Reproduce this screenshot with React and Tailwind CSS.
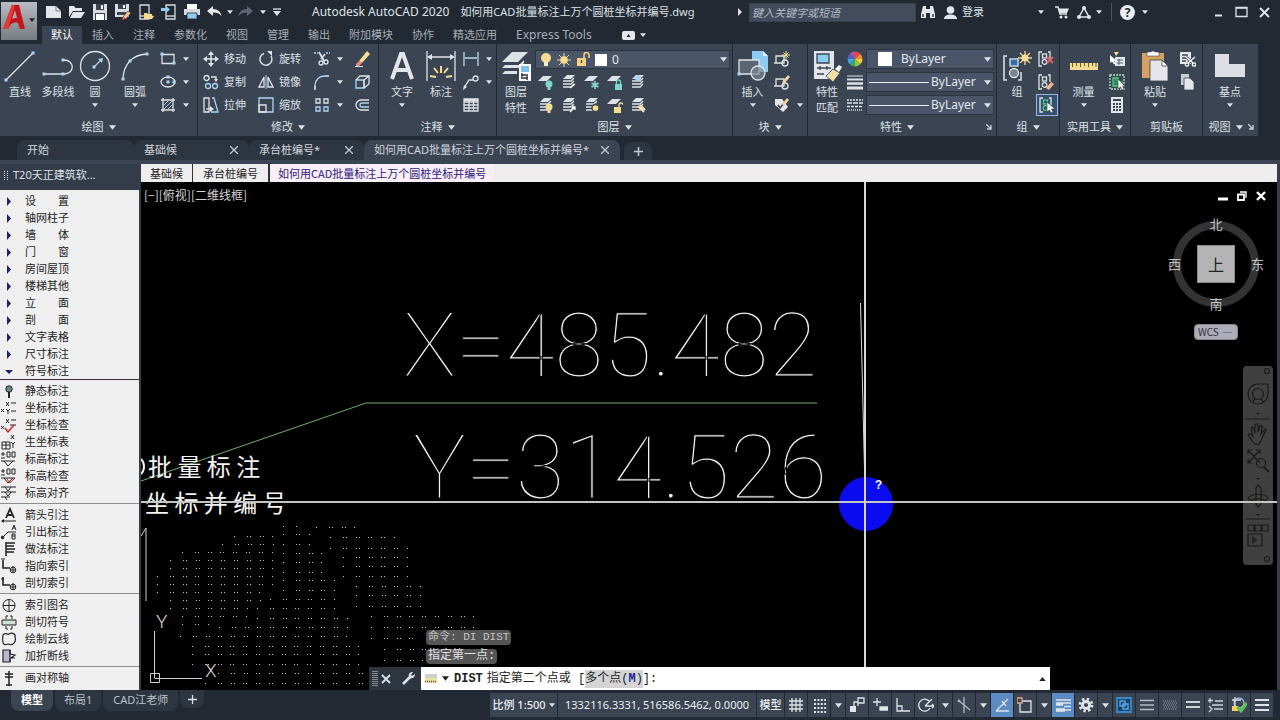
import React from "react";

/* ---------- shared primitives ---------- */

const FONT = "font-['Noto_Sans','Noto_Sans_CJK_SC',sans-serif]";

function Svg({ w = 16, h = 16, box, children, className = "" }) {
  return (
    <svg
      width={w}
      height={h}
      viewBox={box || `0 0 ${w} ${h}`}
      fill="none"
      stroke="#dfe3e8"
      strokeWidth="1.3"
      className={`shrink-0 ${className}`}
      aria-hidden="true"
    >
      {children}
    </svg>
  );
}

function Tri({ big, dark, className = "" }) {
  return (
    <svg width={big ? 7 : 6} height={big ? 5 : 4} viewBox="0 0 8 5" className={`shrink-0 ${dark ? "fill-[#222]" : "fill-[#dfe3e8]"} ${className}`} aria-hidden="true">
      <path d="M0 0h8L4 5z" />
    </svg>
  );
}

/* ---------- quick access icons ---------- */

const quick = {
  新建: (
    <Svg w={18} h={16}><path d="M1 2h10l5 5v7H1z" fill="#e4e6ea" stroke="none" /><path d="M11 2v5h5" stroke="#7a828e" strokeWidth="1" /></Svg>
  ),
  打开: (
    <Svg w={18} h={16}><path d="M1 13V2h5l1.500 2H14v3H5z" fill="#e4e6ea" stroke="none" /><path d="M5 8h12l-4 6H2z" fill="#e4e6ea" stroke="none" /></Svg>
  ),
  保存: (
    <Svg><path d="M1 0h14v16H1z" fill="#d8dbe0" stroke="none" /><path d="M4 0h8v6H4zM3 9h10v7H3z" fill="#3a424e" stroke="none" /><path d="M9 1h2v4H9zM4 10h8v6H4z" fill="#fff" stroke="none" /></Svg>
  ),
  另存为: (
    <Svg><path d="M0 0h14v13H0z" fill="#d8dbe0" stroke="none" /><path d="M3 0h8v5H3zM2 8h9v3H2z" fill="#3a424e" stroke="none" /><path d="M8 1h2v3H8z" fill="#fff" stroke="none" /><path d="M8 13l5-6 3 2-5 6z" fill="#f1c98a" stroke="#222933" strokeWidth=".6" /><path d="M7 16l1-3.500 3 2z" fill="#e8664f" stroke="none" /></Svg>
  ),
  从移动设备打开: (
    <Svg><path d="M2 1h9v14H2z" fill="#222933" stroke="#d8dbe0" /><path d="M2 12h9" /><path d="M6 14v-5h3l1 1h4v1.500l2 .5-2 3H6z" fill="#f5dc93" stroke="none" /></Svg>
  ),
  保存到移动设备: (
    <Svg><path d="M5 1h9v14H5z" fill="#222933" stroke="#d8dbe0" /><path d="M5 12h9" /><path d="M0 4h5V2l4 3.500L5 9V7H0z" fill="#8ecbf0" stroke="none" /></Svg>
  ),
  打印: (
    <Svg><path d="M3 0h10v5H3z" fill="#fff" stroke="none" /><path d="M0 5h16v6H0z" fill="#d8dbe0" stroke="none" /><path d="M3 9h10v6H3z" fill="#8ecbf0" stroke="#222933" strokeWidth=".8" /></Svg>
  ),
};

function Undo({ dim, flip }) {
  return (
    <Svg w={16} h={12} className={flip ? "-scale-x-100" : ""}>
      <path d="M1 5l6-5v3c5 0 8 3 8.500 7-2-2.500-4.500-3.500-8.500-3.500V10z" fill={dim ? "#5d6672" : "#e4e6ea"} stroke="none" />
    </Svg>
  );
}

/* ---------- title bar ---------- */

function IconButton({ label, className = "", children }) {
  return (
    <button type="button" aria-label={label} className={`flex items-center justify-center ${className}`}>
      {children}
    </button>
  );
}

function TitleBar() {
  return (
    <div className="flex h-6 items-center">
      <div className="flex items-center pl-[5px]">
        {Object.entries(quick).map(([name, icon]) => (
          <IconButton key={name} label={name} className="w-[23px]">{icon}</IconButton>
        ))}
        <IconButton label="放弃" className="w-[22px]"><Undo /></IconButton>
        <IconButton label="放弃列表" className="w-[10px]"><Tri /></IconButton>
        <IconButton label="重做" className="w-[22px]"><Undo dim flip /></IconButton>
        <IconButton label="重做列表" className="w-[12px]"><Tri /></IconButton>
        <IconButton label="自定义快速访问工具栏" className="w-[16px]">
          <Svg w={8} h={8}><path d="M0 1h8" /><path d="M0 3h8L4 8z" fill="#dfe3e8" stroke="none" /></Svg>
        </IconButton>
      </div>
      <h1 className="ml-[27px] flex gap-[11px] whitespace-nowrap text-[12px] text-[#dde1e6]">
        <span>Autodesk AutoCAD 2020</span>
        <span className="text-[11px] leading-[18px]">如何用CAD批量标注上万个圆桩坐标并编号.dwg</span>
      </h1>
      <div className="ml-auto flex items-center">
        <svg width="4" height="8" className="mr-[7px] fill-[#dfe3e8]" aria-hidden="true"><path d="M0 0l4 4-4 4z" /></svg>
        <input
          aria-label="搜索"
          placeholder="键入关键字或短语"
          className="h-[19px] w-[167px] border border-[#39424f] bg-[#424c5c] px-[2px] text-[11px] italic text-white placeholder:text-[#b4bbc6]"
        />
        <IconButton label="查找" className="w-[24px]">
          <Svg w={14} h={14}><path d="M2 1h3v3h4V1h3l2 8v4H9V8H5v5H0V9z" fill="#e4e6ea" stroke="none" /><path d="M2 9v3M12 9v3" stroke="#222933" /></Svg>
        </IconButton>
        <button type="button" className="flex w-[91px] items-center gap-[5px] pl-[4px] text-[11px] text-[#dde1e6]">
          <Svg w={13} h={13}><circle cx="6.500" cy="4" r="3.800" fill="#e4e6ea" stroke="none" /><path d="M0 13c0-3 3-4 5-4.500h3c2 .5 5 1.500 5 4.500z" fill="#e4e6ea" stroke="none" /></Svg>
          登录
        </button>
        <IconButton label="登录菜单" className="w-[20px]"><Tri /></IconButton>
        <IconButton label="商店" className="w-[22px]">
          <Svg w={14} h={13}><path d="M0 1h3l2 7h7" strokeWidth="1.500" /><path d="M3.500 2.500H14L12 7H5z" fill="#e4e6ea" stroke="none" /><circle cx="6" cy="11" r="1.500" fill="#e4e6ea" stroke="none" /><circle cx="11" cy="11" r="1.500" fill="#e4e6ea" stroke="none" /></Svg>
        </IconButton>
        <IconButton label="网络" className="w-[22px]">
          <Svg w={14} h={13}><path d="M7 2L2 11h10z" strokeWidth="1.500" /><circle cx="7" cy="2" r="2" fill="#e4e6ea" stroke="none" /><circle cx="2" cy="11" r="2" fill="#e4e6ea" stroke="none" /><circle cx="12" cy="11" r="2" fill="#e4e6ea" stroke="none" /></Svg>
        </IconButton>
        <IconButton label="网络菜单" className="w-[8px]"><Tri /></IconButton>
        <span className="mx-2 h-[18px] w-px bg-[#4a5462]" />
        <button type="button" className="flex size-[15px] items-center justify-center rounded-full bg-[#eceef1] text-[12px] leading-[15px] font-bold text-[#222933]">?</button>
        <IconButton label="帮助菜单" className="w-[20px]"><Tri /></IconButton>
        <IconButton label="最小化" className="ml-[52px] h-4 w-[22px]"><Svg w={9} h={10}><path d="M1 8.500h7" strokeWidth="2" /></Svg></IconButton>
        <IconButton label="最大化" className="w-[24px]"><Svg w={13} h={12}><path d="M1 1.500h11v9H1z" /><path d="M1 2h11" strokeWidth="1.500" /></Svg></IconButton>
        <IconButton label="关闭" className="mr-[4px] w-[23px]"><Svg w={11} h={11}><path d="M1 1l9 9M10 1l-9 9" strokeWidth="2" /></Svg></IconButton>
      </div>
    </div>
  );
}

const ribbonTabs = ["默认", "插入", "注释", "参数化", "视图", "管理", "输出", "附加模块", "协作", "精选应用", "Express Tools"];

function RibbonTabs() {
  return (
    <div role="tablist" className="flex h-5 items-end gap-px pl-[5px]">
      {ribbonTabs.map((t, i) => (
        <button
          key={t}
          type="button"
          role="tab"
          aria-selected={i === 0}
          className={`h-[18px] px-[9px] leading-[18px] whitespace-nowrap ${i === 10 ? "text-[12px]" : "text-[11px]"} ${i === 0 ? "bg-[#3b4453] text-white" : "text-[#a7adb6]"}`}
        >
          {t}
        </button>
      ))}
      <IconButton label="最小化功能区" className="ml-[20px] h-[18px] gap-[5px]">
        <Svg w={13} h={9}><rect width="13" height="9" rx="2" fill="#e4e6ea" stroke="none" /><path d="M4.500 6l2-3 2 3z" fill="#222933" stroke="none" /></Svg>
        <Tri />
      </IconButton>
    </div>
  );
}

/* ---------- ribbon ---------- */

function Panel({ title, menu = true, launcher, width, children }) {
  return (
    <section aria-label={title} className={`flex h-[92px] shrink-0 flex-col border-r border-[#222933] bg-[#3b4453] ${width}`}>
      <div className="flex h-[74px] pt-[4px]">{children}</div>
      <div className="flex h-[18px] items-center text-[11px] text-[#dde1e6]">
        <span className="flex flex-1 items-center justify-center gap-[5px]">
          {title}
          {menu && <Tri big />}
        </span>
        {launcher && (
          <IconButton label={`${title}设置`} className="mr-[4px]">
            <Svg w={6} h={6}><path d="M0 0l5 5M5 1v4H1" stroke="#c8cdd4" /></Svg>
          </IconButton>
        )}
      </div>
    </section>
  );
}

function Big({ label, icon, width, menu }) {
  return (
    <button type="button" className={`flex shrink-0 flex-col items-center text-[11px] leading-[16px] text-[#dde1e6] ${width}`}>
      <span className="flex h-[36px] items-center justify-center">{icon}</span>
      {label.map((l) => <span key={l}>{l}</span>)}
      {menu && <Tri className="mt-[3px]" />}
    </button>
  );
}

function Col({ className = "", children }) {
  return <div className={`flex flex-col gap-px ${className}`}>{children}</div>;
}

function Small({ label, text, icon, menu }) {
  return (
    <button type="button" aria-label={text || label} className="flex h-[22px] items-center gap-[5px] text-[11px] text-[#dde1e6]">
      {icon}
      {text}
      {menu && <Tri className="ml-[2px]" />}
    </button>
  );
}

const node = (x, y) => <rect key={`${x}-${y}`} x={x - 1.500} y={y - 1.500} width="3" height="3" fill="#a9d6f5" stroke="none" />;

const Sheet = ({ y = 0, x = 0 }) => <path d={`M${x + 1} ${y + 4}l4-4h8l-4 4z`} fill="#dfe3e8" stroke="none" />;

const Layers = ({ children, single }) => (
  <Svg>
    {single ? <path d="M0 7l5-5h9l-5 5z" fill="#dfe3e8" stroke="none" /> : (
      <>
        <Sheet y={1} x={1} />
        <path d="M2 7h8l3-3M2 10h8l3-3M2 13h8l3-3" strokeWidth="1.400" />
      </>
    )}
    {children}
  </Svg>
);

const Bulb = ({ c }) => <g stroke="none"><circle cx="11" cy="10" r="3.500" fill={c} /><path d="M9.500 13h3v3h-3z" fill={c} /></g>;
const Brackets = ({ c = "#dfe3e8" }) => (
  <>
    <path d="M4 1H1v14h3M10 1h2v7" />
    <rect x="4.500" y="3" width="4" height="4" stroke={c} />
    <circle cx="6.500" cy="11" r="2.300" stroke={c} />
  </>
);
const Cursor = ({ x = 8, y = 5 }) => <path d={`M${x} ${y}v10l2.500-2 1.500 3 2-1-1.500-3H16z`} fill="#fff" stroke="#2b333e" strokeWidth=".6" />;

function DrawPanel() {
  return (
    <Panel title="绘图" width="w-[198px]">
      <Big width="w-[40px]" label={["直线"]} icon={<Svg w={32} h={32}><path d="M2 30L30 2" />{node(2, 30)}{node(29, 3)}</Svg>} />
      <Big width="w-[36px]" label={["多段线"]} icon={<Svg w={32} h={32}><path d="M2 24h20c11 0 11-14 0-14" />{node(2, 24)}{node(21, 24)}{node(21, 10)}</Svg>} />
      <Big width="w-[38px]" label={["圆"]} menu icon={<Svg w={32} h={32}><circle cx="16" cy="16" r="14.500" /><path d="M15 17l7-7" stroke="#a9d6f5" /><path d="M24 8l-1 5-4-4z" fill="#a9d6f5" stroke="none" />{node(15, 17)}</Svg>} />
      <Big width="w-[42px]" label={["圆弧"]} menu icon={<Svg w={32} h={32}><path d="M4 30C4 14 14 4 29 4" />{node(4, 29)}{node(11, 11)}{node(28, 4)}</Svg>} />
      <Col className="pl-[4px]">
        <Small label="矩形" menu icon={<Svg><path d="M2 3.500h12v9H2z" />{node(2, 3)}{node(14, 12)}</Svg>} />
        <Small label="椭圆" menu icon={<Svg><ellipse cx="8" cy="8" rx="7" ry="5" />{node(8, 8)}{node(8, 3)}{node(14, 8)}</Svg>} />
        <Small label="图案填充" menu icon={<Svg><path d="M1 3h14M1 13h14M3 1v14M13 1v14" /><path d="M4 8l4-4M4 12l8-8M8 12l4-4" stroke="#a9c6e0" strokeWidth="1" /></Svg>} />
      </Col>
    </Panel>
  );
}

function ModifyPanel() {
  return (
    <Panel title="修改" width="w-[181px]">
      <Col className="pl-[5px]">
        <Small text="移动" icon={<Svg><path d="M8 2v12M2 8h12" strokeWidth="1.500" /><path d="M8 0l3 4H5zM8 16l3-4H5zM0 8l4-3v6zM16 8l-4-3v6z" fill="#dfe3e8" stroke="none" /></Svg>} />
        <Small text="复制" icon={<Svg><circle cx="3.500" cy="4" r="2.500" /><path d="M8 3h5v4" /><path d="M11 5h4l-2 3z" fill="#dfe3e8" stroke="none" /><circle cx="5" cy="12" r="2.500" stroke="#a9d6f5" /><circle cx="12" cy="12" r="2.500" stroke="#a9d6f5" /></Svg>} />
        <Small text="拉伸" icon={<Svg><path d="M1 1h5v14H1z" /><path d="M9 1h2l4 14H8" stroke="#a9d6f5" /><path d="M3 12h7" /><path d="M7 9l4 3-4 3z" fill="#dfe3e8" stroke="none" /></Svg>} />
      </Col>
      <Col className="pl-[12px]">
        <Small text="旋转" icon={<Svg><path d="M6 2.500A6 6 0 1 0 13 5" strokeWidth="1.500" /><path d="M9 0h5v5z" fill="#dfe3e8" stroke="none" /></Svg>} />
        <Small text="镜像" icon={<Svg><path d="M6 3v10H1zM10 3v10h5z" /><path d="M8 1v14" stroke="#a9d6f5" strokeWidth="1" /></Svg>} />
        <Small text="缩放" icon={<Svg><path d="M1 1h14v14H1z" stroke="#a9d6f5" /><path d="M1 8h7v7H1z" /></Svg>} />
      </Col>
      <Col className="pl-[13px]">
        <Small label="修剪" menu icon={<Svg><path d="M0 2h4M12 2h4" stroke="#a9d6f5" strokeDasharray="2 1" /><path d="M5 1l5 9M11 3L7 8" strokeWidth="1.800" /><circle cx="7" cy="12" r="2" /><circle cx="12" cy="11" r="2" /></Svg>} />
        <Small label="圆角" menu icon={<Svg><path d="M1 15V11M1 11C2 5 6 2 11 2" stroke="#a9d6f5" /><path d="M11 2h4M1 12v4" /></Svg>} />
        <Small label="阵列" menu icon={<Svg><path d="M2 2h4v4H2zM10 2h4v4h-4z" /><path d="M2 10h4v4H2zM10 10h4v4h-4z" stroke="#a9d6f5" /></Svg>} />
      </Col>
      <Col className="pl-[11px]">
        <Small label="删除" icon={<Svg><path d="M5 10L13 0l3 3-8 9z" fill="#f5dc93" stroke="none" /><path d="M5 10l3 2-3 3H2l0-2z" fill="#e8877b" stroke="none" /><path d="M1 15.500h8" strokeWidth="1" /></Svg>} />
        <Small label="分解" icon={<Svg><path d="M2 6h8v8H2z" stroke="#a9d6f5" /><path d="M2 6l4-4h9l-5 4M15 2v8l-5 4M10 6v8" /></Svg>} />
        <Small label="偏移" icon={<Svg><path d="M15 3H7a5 5 0 0 0 0 10h8" /><path d="M15 6H8a2 2 0 0 0 0 4h7" stroke="#a9d6f5" /></Svg>} />
      </Col>
    </Panel>
  );
}

function AnnotatePanel() {
  return (
    <Panel title="注释" width="w-[118px]">
      <Big width="w-[46px]" label={["文字"]} menu icon={<Svg w={28} h={32}><path d="M4 29L13 4h2l9 25M7 20h14" stroke="#e4e6ea" strokeWidth="4" /></Svg>} />
      <Big
        width="w-[32px]"
        label={["标注"]}
        icon={
          <Svg w={32} h={32}>
            <path d="M2 1v30M30 1v30M4 7h24" />
            <path d="M2 7l5-3v6zM30 7l-5-3v6z" fill="#dfe3e8" stroke="none" />
            <path d="M16 16v7M9 18l4 5M23 18l-4 5M5 26l6 1M27 26l-6 1" stroke="#f5dc93" strokeWidth="2" />
          </Svg>
        }
      />
      <Col className="pl-[6px]">
        <Small label="线性" menu icon={<Svg><path d="M1 1v14M15 1v14M2 7h12" stroke="#bcd9ee" /></Svg>} />
        <Small label="引线" menu icon={<Svg><path d="M1 14L6 6h4" /><circle cx="12.500" cy="4.500" r="2.500" /><path d="M0 16l1-5 3 2z" fill="#dfe3e8" stroke="none" /></Svg>} />
        <Small label="表格" icon={<Svg><path d="M1 2h14v12H1zM1 5h14M1 8h14M1 11h14M6 4v10M10.500 4v10" /><path d="M1 3h14" strokeWidth="2" /></Svg>} />
      </Col>
    </Panel>
  );
}

function LayersPanel() {
  const top = [
    ["关闭", <Layers single><Bulb c="#7fd3cf" /></Layers>],
    ["隔离", <Layers><path d="M9 14l5-4" stroke="#fff" /></Layers>],
    ["冻结", <Layers single><path d="M11 7v8M7.500 9l7 4M14.500 9l-7 4" stroke="#7fd3cf" strokeWidth="1.800" /></Layers>],
    ["锁定", <Layers single><path d="M8 10h7v6H8z" fill="#7fd3cf" stroke="none" /><path d="M9.500 10V8a2 2 0 0 1 4 0v2" stroke="#7fd3cf" /></Layers>],
    ["置为当前", <Layers><circle cx="8" cy="4" r="3" fill="#a9d6f5" stroke="none" /></Layers>],
  ];
  const bottom = [
    ["打开所有图层", <Layers><Bulb c="#f5dc93" /></Layers>],
    ["取消隔离", <Layers><path d="M9 15l5-5M11 10h3v3" stroke="#fff" /></Layers>],
    ["解冻所有图层", <Layers><circle cx="11.500" cy="11" r="3.500" fill="#f5dc93" stroke="#3b4453" /></Layers>],
    ["解锁", <Layers single><path d="M7 10h7v6H7z" fill="#f5dc93" stroke="none" /><path d="M12 10V8a2 2 0 0 1 4 0" stroke="#f5dc93" /></Layers>],
    ["匹配图层", <Layers><path d="M8 9l6 6M10 8l5 5" stroke="#f1e2b8" strokeWidth="2" /></Layers>],
  ];
  return (
    <Panel title="图层" width="w-[236px]">
      <Big
        width="w-[38px]"
        label={["图层", "特性"]}
        icon={
          <Svg w={32} h={32}>
            <path d="M2 12L12 2h16L18 12zM2 18l3-3h14l5-5v3l-5 5zM2 24l3-3h12v3z" fill="#dfe3e8" stroke="none" />
            <path d="M19 14h12v17H19z" fill="#fff" stroke="none" />
            <path d="M21 16h8v6h-8z" fill="#7cc0ef" stroke="none" />
            <path d="M21 25h7M28 28h-7M22 23v4M27 26v4" stroke="#2b333e" />
          </Svg>
        }
      />
      <div className="flex flex-1 flex-col gap-px pr-[2px]">
        <div className="mt-[2px] flex h-[19px] items-center gap-[5px] border border-[#2d3541] bg-[#4a556a] px-[4px]">
          <Svg w={12} h={16}><circle cx="6" cy="6" r="5" fill="#f5dc93" stroke="none" /><path d="M4 10h4v4H4z" fill="#f3ead0" stroke="none" /></Svg>
          <Svg w={14} h={14}><path d="M7 0v14M0 7h14M2 2l10 10M12 2L2 12" stroke="#f5dc93" strokeWidth="1" /><circle cx="7" cy="7" r="3.800" fill="#f5dc93" stroke="none" /></Svg>
          <Svg w={14} h={15}><path d="M1 6h9v8H1z" fill="#f5cf7f" stroke="none" /><path d="M8 6V3a2.500 2.500 0 0 1 5 0v3" stroke="#f5cf7f" strokeWidth="1.600" /><path d="M5.500 8v3" stroke="#3b4453" /></Svg>
          <span className="size-[12px] shrink-0 bg-white" />
          <select aria-label="当前图层" className="h-[17px] min-w-0 flex-1 appearance-none bg-transparent text-[12px] leading-[17px] text-[#e4e6ea]"><option>0</option></select>
          <Tri big className="-mr-[2px]" />
        </div>
        <div className="mt-px flex h-[22px] items-center gap-[7px] pl-[3px]">
          {top.map(([n, i]) => <IconButton key={n} label={n}>{i}</IconButton>)}
        </div>
        <div className="flex h-[22px] items-center gap-[7px] pl-[3px]">
          {bottom.map(([n, i]) => <IconButton key={n} label={n}>{i}</IconButton>)}
        </div>
      </div>
    </Panel>
  );
}

function BlockPanel() {
  const base = <><path d="M2 5h8v7H2zM0 12h4" /><circle cx="11" cy="12" r="3" /></>;
  return (
    <Panel title="块" width="w-[75px]">
      <Big
        width="w-[39px]"
        label={["插入"]}
        menu
        icon={
          <Svg w={32} h={32}>
            <path d="M15 1h11l5 5v16H15z" fill="#8ecbf0" stroke="none" />
            <path d="M26 1l5 5h-5z" fill="#e6f4fd" stroke="none" />
            <path d="M2 10h20v14H2z" fill="#5b6573" />
            <circle cx="21" cy="23" r="7" fill="#7a8797" fillOpacity=".7" />
            {node(2, 24)}
          </Svg>
        }
      />
      <Col className="pl-[2px]">
        <Small label="创建块" icon={<Svg>{base}<path d="M12 0v8M8 4h8M9.500 1.500l5 5M14.500 1.500l-5 5" stroke="#f5dc93" strokeWidth="1" /></Svg>} />
        <Small label="编辑块" icon={<Svg>{base}<path d="M8 8l6-7 2 2-6 7z" fill="#f3d3a4" stroke="none" /></Svg>} />
        <Small label="编辑属性" menu icon={<Svg><path d="M1 2h7l6 8-5 5L1 8z" fill="#e4e6ea" stroke="none" /><path d="M4 8l2 3 5-6" stroke="#3b4453" strokeWidth="1.600" /><path d="M8 7l5-6 2 2-5 6z" fill="#f3d3a4" stroke="none" /></Svg>} />
      </Col>
    </Panel>
  );
}

function PropSelect({ label, swatch }) {
  return (
    <div className="flex h-[20px] items-center border border-[#2d3541] bg-[#4a556a] pr-[2px] text-[12px] text-[#e4e6ea]">
      {swatch
        ? <span className="mr-[9px] ml-[11px] size-[14px] shrink-0 bg-white" />
        : <span className="mr-[2px] ml-[2px] h-px w-[60px] shrink-0 bg-[#eceef1]" />}
      <select aria-label={label} className="h-[18px] min-w-0 flex-1 appearance-none bg-transparent leading-[18px]"><option>ByLayer</option></select>
      <Tri big />
    </div>
  );
}

const wheel = ["#e8473f", "#f08a34", "#f4cf3b", "#8cc63f", "#34a86a", "#3aa7d8", "#4a63c9", "#b04ea8"];

function PropertiesPanel() {
  return (
    <Panel title="特性" launcher width="w-[189px]">
      <Big
        width="w-[38px]"
        label={["特性", "匹配"]}
        icon={
          <Svg w={32} h={32}>
            <path d="M3 1h20v28H3z" fill="#e4e6ea" stroke="none" />
            <path d="M6 4h12v9H6z" fill="#8ecbf0" stroke="#3b4453" />
            <path d="M6 18h14M6 24h7M9 16v4M16 16v4" stroke="#3b4453" />
            <path d="M15 26l7-7 7 4-7 9z" fill="#f3dfa8" stroke="#3b4453" strokeWidth=".8" />
            <path d="M24 19l4-4 3 2-3 5z" fill="#fff" stroke="none" />
          </Svg>
        }
      />
      <Col className="pl-px">
        <Small
          label="对象颜色"
          icon={
            <Svg>
              {wheel.map((c, i) => {
                const a = (i * Math.PI) / 4;
                const b = ((i + 1) * Math.PI) / 4;
                return <path key={c} d={`M8 8L${8 + 7.5 * Math.sin(a)} ${8 - 7.5 * Math.cos(a)}A7.5 7.5 0 0 1 ${8 + 7.5 * Math.sin(b)} ${8 - 7.5 * Math.cos(b)}z`} fill={c} stroke="none" />;
              })}
            </Svg>
          }
        />
        <Small label="线宽" icon={<Svg><path d="M0 2h16" strokeWidth="1" /><path d="M0 5.500h16" strokeWidth="2" /><path d="M0 9.500h16" strokeWidth="2.500" /><path d="M0 14h16" strokeWidth="3" /></Svg>} />
        <Small label="线型" icon={<Svg><path d="M0 3h16" strokeDasharray="2 1" /><path d="M0 6h16" strokeDasharray="5 1" /><path d="M0 9.500h16" strokeDasharray="3 1" /><path d="M0 13h16" strokeDasharray="1 1" /></Svg>} />
      </Col>
      <div className="ml-[3px] flex flex-1 flex-col gap-[3px] pt-px pr-[2px]">
        <PropSelect label="颜色" swatch />
        <PropSelect label="线宽" />
        <PropSelect label="线型" />
      </div>
    </Panel>
  );
}

function GroupPanel() {
  return (
    <Panel title="组" width="w-[63px]">
      <Big
        width="w-[40px]"
        label={["组"]}
        icon={
          <Svg w={32} h={32}>
            <path d="M6 6H3v24h3M20 22v8h-3" strokeWidth="1.500" />
            <rect x="9" y="9" width="8" height="7" fill="#2f6ea8" />
            <circle cx="13" cy="23" r="4.500" fill="#7a8490" />
            <path d="M24 1v14M17 8h14M19 3l10 10M29 3L19 13" stroke="#f5dc93" /><circle cx="24" cy="8" r="3.500" fill="#f5dc93" stroke="none" />
          </Svg>
        }
      />
      <Col className="-ml-px">
        <Small label="解除编组" icon={<span className="flex w-[20px] justify-center"><Svg><Brackets /><path d="M9 6l6 6M15 6l-6 6" stroke="#e2606b" strokeWidth="1.800" /></Svg></span>} />
        <Small label="编辑组" icon={<span className="flex w-[20px] justify-center"><Svg><Brackets /><path d="M8 14l5-6 3 2-5 6z" fill="#f1b58e" stroke="none" /></Svg></span>} />
        <Small label="启用组选择" icon={<span className="flex h-[22px] w-[22px] items-center justify-center border border-[#8fb8e6] bg-[#36506f]"><Svg><Brackets c="#4bd086" /><Cursor /></Svg></span>} />
      </Col>
    </Panel>
  );
}

function UtilitiesPanel() {
  return (
    <Panel title="实用工具" width="w-[71px]">
      <Big
        width="w-[47px]"
        label={["测量"]}
        menu
        icon={<Svg w={28} h={32}><path d="M0 13h28v7H0z" fill="#f5dc93" stroke="none" /><path d="M2.500 13v4M6.500 13v3M10.500 13v4M14.500 13v3M18.500 13v4M22.500 13v3M26 13v4" stroke="#6b5a2b" strokeWidth="1" /></Svg>}
      />
      <Col className="pl-[2px]">
        <Small label="快速选择" icon={<Svg><path d="M6 6h10v9H6z" fill="#e4e6ea" stroke="none" /><path d="M8 9h6M8 12h6M10 8v6" stroke="#3b4453" strokeWidth=".8" /><path d="M1 4v8l2-1.500 2 3 1.500-1L5 10h3z" fill="#fff" stroke="none" /><path d="M5 1h5L7 5z" fill="#f5dc93" stroke="none" /></Svg>} />
        <Small label="全部选择" icon={<Svg><path d="M1 1h14v14H1z" strokeDasharray="2 1" stroke="#b9dcc6" /><path d="M4 4h5v4h4v4H4z" fill="#2f8a57" stroke="#4bd086" /><Cursor x={9} y={5} /></Svg>} />
        <Small label="快速计算器" icon={<Svg><path d="M2 0h12v16H2z" fill="#e4e6ea" stroke="none" /><path d="M4 2h8v2H4z" fill="#3b4453" stroke="none" /><path d="M4 7h8M4 10h8M4 13h8" stroke="#3b4453" strokeWidth="1.800" strokeDasharray="2 1" /></Svg>} />
      </Col>
    </Panel>
  );
}

function ClipboardPanel() {
  return (
    <Panel title="剪贴板" menu={false} width="w-[72px]">
      <Big
        width="w-[48px]"
        label={["粘贴"]}
        menu
        icon={
          <Svg w={28} h={32}>
            <path d="M1 3h22v25H1z" fill="#d5a163" stroke="none" />
            <path d="M6 2h4a2.500 2.500 0 0 1 4 0h4v4H6z" fill="#fff" stroke="#3b4453" strokeWidth=".6" />
            <path d="M9 10h12l6 6v15H9z" fill="#e4e6ea" stroke="#3b4453" strokeWidth=".8" />
            <path d="M21 10v6h6z" fill="#fff" stroke="#3b4453" strokeWidth=".8" />
          </Svg>
        }
      />
      <Col className="pl-px">
        <Small label="剪切" icon={<Svg><path d="M0 1h11v12H0z" fill="#e4e6ea" stroke="none" /><path d="M2 4h6M2 7h4M2 10h4" stroke="#3b4453" /><path d="M6 6l8 7M15 6l-8 7" stroke="#3b4453" strokeWidth="2.800" /><path d="M6 6l7 6M15 6l-7 6" stroke="#fff" /><circle cx="7" cy="13.500" r="1.700" stroke="#fff" /><circle cx="14" cy="13.500" r="1.700" stroke="#fff" /></Svg>} />
        <Small label="复制剪裁" icon={<Svg><path d="M1 0h8v11H1z" fill="#c9ced5" stroke="none" /><path d="M4 4h6l4 4v8H4z" fill="#e4e6ea" stroke="#3b4453" strokeWidth=".8" /></Svg>} />
      </Col>
    </Panel>
  );
}

function ViewPanel() {
  return (
    <Panel title="视图" launcher width="w-[56px]">
      <Big width="w-[54px]" label={["基点"]} menu icon={<Svg w={32} h={32}><path d="M1 4h14v10h16v13H1z" fill="#dcdfe3" stroke="none" /></Svg>} />
    </Panel>
  );
}

/* ---------- drawing tabs ---------- */

const fileTabs = [
  { name: "开始", width: "w-[117px]" },
  { name: "基础候", width: "w-[115px]", close: true },
  { name: "承台桩编号*", width: "w-[115px]", close: true },
  { name: "如何用CAD批量标注上万个圆桩坐标并编号*", width: "w-[256px]", close: true, active: true },
];

function FileTabs() {
  return (
    <div className="flex h-6 items-end border-b-[4px] border-[#3b4453] pl-[17px]">
      {fileTabs.map((t) => (
        <div
          key={t.name}
          className={`flex h-[20px] items-center justify-between rounded-t-lg pr-[11px] pl-[10px] text-[11px] whitespace-nowrap text-[#d0d5dc] ${t.width} ${t.active ? "bg-[#3b4453]" : "bg-[#2d3540]"}`}
        >
          <button type="button">{t.name}</button>
          {t.close && (
            <IconButton label={`关闭 ${t.name}`}><Svg w={8} h={8}><path d="M0 0l8 8M8 0L0 8" stroke="#c4c9d0" /></Svg></IconButton>
          )}
        </div>
      ))}
      <IconButton label="新图形" className="ml-[4px] h-[18px] w-[28px] rounded-t-lg bg-[#2d3540]"><Svg w={9} h={9}><path d="M4.500 0v9M0 4.500h9" stroke="#c4c9d0" strokeWidth="1.500" /></Svg></IconButton>
    </div>
  );
}

/* ---------- side menu ---------- */

const ink = { stroke: "#222" };
const sideGroups = [
  ["设 置", "轴网柱子", "墙 体", "门 窗", "房间屋顶", "楼梯其他", "立 面", "剖 面", "文字表格", "尺寸标注", "符号标注"].map((t, i) => [
    t,
    i === 10
      ? <path d="M4 7h8l-4 4z" fill="#1c2360" stroke="none" />
      : <path d="M6 4l4 4.500L6 13z" fill="#1c2360" stroke="none" />,
  ]),
  [
    ["静态标注", <g {...ink}><circle cx="8" cy="6" r="3.200" fill="#6b8a86" /><path d="M8 9v6" strokeWidth="2" /></g>],
    ["坐标标注", <g {...ink} strokeWidth="1"><path d="M5 2l3 4M8 2L5 6M10 3h5M5 9l2 2 2-2M7 11v3M10 11h5M0 9l3 3M3 9l-3 3" /></g>],
    ["坐标检查", <g {...ink} strokeWidth="1"><path d="M5 2l3 4M8 2L5 6M10 3h5M9 8h6M0 9l3 3M3 9l-3 3" /><path d="M4 11l3 4 6-7" stroke="#c22" strokeWidth="1.400" /></g>],
    ["生坐标表", <g {...ink} strokeWidth="1"><path d="M1 8h8v7H1zM1 11h8M5 8v7M10 1l3 4M13 1l-3 4M10 8l2 2 2-2M12 10v4" /></g>],
    ["标高标注", <g {...ink} strokeWidth="1"><path d="M0 3h4M2 1v4M0 7h4M6 1h3v5H6zM11 1h3v5h-3zM0 10h14M3 10l4 5 5-5" /></g>],
    ["标高检查", <g {...ink} strokeWidth="1"><path d="M0 3h4M2 1v4M0 7h4M6 1h3v5H6zM11 1h3v5h-3zM0 10h14M3 10l4 5 5-5" /><path d="M6 11l3 4 5-5" stroke="#c22" /></g>],
    ["标高对齐", <g {...ink} strokeWidth="1"><path d="M0 2h15M0 7h15M0 12h9M4 2l3 4 3-4M4 7l3 4 3-4M4 12l2 3" /></g>],
  ],
  [
    ["箭头引注", <g {...ink}><path d="M5 11l4-9 4 9M6.500 8h5" strokeWidth="1.800" /><path d="M1 14h14" /><path d="M0 14l3-2v4z" fill="#222" stroke="none" /></g>],
    ["引出标注", <g {...ink} strokeWidth="1"><path d="M1 14l6-6h8M11 6l2-5 2 5M12 4h2M11 10h3v5h-3zM11 12h3" /><circle cx="1.500" cy="13.500" r="1.300" fill="#222" /></g>],
    ["做法标注", <g {...ink}><path d="M5 1v14M5 2h9M5 5h8M5 8h9M5 11h8" strokeWidth="1.500" /></g>],
    ["指向索引", <g {...ink}><path d="M2 2v8h7" strokeWidth="1.600" /><circle cx="12" cy="12" r="2.800" strokeWidth="1" /><path d="M9 12h6M12 8v7M0 1h4" strokeWidth="1" /></g>],
    ["剖切索引", <g {...ink}><path d="M2 2v8h7" strokeWidth="1.600" /><circle cx="12" cy="12" r="2.800" strokeWidth="1" /><path d="M9 12h6M12 8v7M0 4h3" strokeWidth="1" /></g>],
  ],
  [
    ["索引图名", <g {...ink}><circle cx="8" cy="8.500" r="6" /><path d="M2 8.500h12M8 2.500v12" /></g>],
    ["剖切符号", <g {...ink} strokeWidth="1"><path d="M1 6h14v5H1z" fill="#cfe0d4" /><path d="M5 5V2h2M11 5V2H9M5 12v3h2M11 12v3H9" /></g>],
    ["绘制云线", <g {...ink} strokeWidth="1.200"><path d="M2 4c2-3 4 0 6-1 3-2 7 0 6 3 1 3 0 5-1 6-2 3-5 1-6 1-3 1-5 1-5-2-1-2 0-5 0-7z" /></g>],
    ["加折断线", <g {...ink} strokeWidth="1.200"><path d="M2 2h7v12H2z" fill="#b9b6cf" /><path d="M9 2v4l5 1-4 3h4M9 14v-3" /></g>],
  ],
  [["画对称轴", <g {...ink} strokeWidth="1.500"><path d="M8 1v15M4 4h8M4 7h8M5 15h6" /></g>]],
];

function SideMenu() {
  return (
    <aside className="mr-[2px] flex w-[139px] shrink-0 flex-col overflow-hidden bg-[#f0efef]">
      <div className="flex h-[26px] shrink-0 items-center gap-[5px] bg-[#343c4a] pb-[3px] pl-[4px] text-[11px] text-[#dde1e6]">
        <Svg w={4} h={10}><path d="M.5 0v10M3.500 0v10" strokeWidth="1" strokeDasharray="1 1" /></Svg>
        <h2>T20天正建筑软...</h2>
      </div>
      <nav aria-label="天正建筑">
        {sideGroups.map((g, i) => (
          <ul key={i} className={`border-b pt-[2px] last:border-b-0 ${i === 0 ? "border-[#3a2f3a]" : "border-[#8d8d8d] pb-[2px]"}`}>
            {g.map(([name, icon]) => (
              <li key={name}>
                <button type="button" className="flex h-[17px] w-full items-center pl-px text-[11px] leading-[16px] text-[#1d1d1d]">
                  <svg width="16" height="16" fill="none" className="mr-[8px] shrink-0" aria-hidden="true">{icon}</svg>
                  <span className="flex w-[44px] justify-between">
                    {name.split(" ").map((p) => <span key={p}>{p}</span>)}
                  </span>
                </button>
              </li>
            ))}
          </ul>
        ))}
      </nav>
    </aside>
  );
}

/* ---------- drawing area ---------- */

/* Pile rows: [y, first x, last x] in drawing units; columns are 12.8 apart */
const piles = [
  [526, 283, 296], [527, 316, 355], [534, 283, 308], [536, 234, 272], [537, 330, 394],
  [544, 222, 272], [544, 283, 308], [548, 330, 407], [552, 182, 272], [553, 283, 321],
  [557, 343, 407], [560, 170, 272], [562, 283, 321], [566, 343, 407], [568, 170, 272],
  [572, 283, 321], [576, 157, 272], [576, 343, 407], [580, 283, 334], [584, 157, 272],
  [586, 356, 419], [590, 283, 334], [592, 157, 259], [595, 356, 419], [600, 170, 259],
  [599, 270, 334], [606, 356, 419], [608, 170, 246], [608, 257, 334], [616, 182, 246],
  [618, 257, 347], [616, 371, 475], [624, 182, 208], [627, 219, 347], [627, 371, 475],
  [636, 180, 347], [638, 371, 420], [646, 192, 360], [649, 384, 490], [654, 192, 360],
  [660, 384, 424], [664, 192, 360], [673, 218, 364], [683, 205, 364],
];

const pilePath = piles
  .map(([y, x0, x1]) => {
    let d = "";
    for (let x = x0; x <= x1 + 2; x += 12.8) {
      const px = Math.round(x);
      d += `M${px} ${y}h1`;
      if (x > x0 && x < x1 - 3) d += `m2 0h1`;
    }
    return d;
  })
  .join("");

function Drawing() {
  return (
    <svg className="absolute inset-0 h-full w-full" aria-label="图形">
      <g transform="translate(-141 -182)">
        <path d="M141 481L366 403H817" fill="none" stroke="#6fae6c" />
        <g fill="#f0f0f0" stroke="#000" strokeWidth="1" fontFamily="Roboto, sans-serif" fontWeight="100" fontSize="89">
          <text x="403" y="376">X=485.482</text>
          <text x="413" y="498">Y=314.526</text>
        </g>
        <path d="M860.500 303L865 490" stroke="#d8d8d8" />
        <path d={pilePath} transform="translate(0 .5)" stroke="#c4c4c4" />
        <g fill="#f4f4f4" fontFamily="'Noto Sans CJK SC', sans-serif" fontSize="24">
          <text x="148" y="476">批 量 标 注</text>
          <text x="145" y="512">坐 标 并 编 号</text>
        </g>
        <path d="M141 459c4 4 4 11 0 15" fill="none" stroke="#f4f4f4" strokeWidth="2" />
        <path d="M141 536l5-8v73" fill="none" stroke="#d0d0d0" />
        <g fill="none" stroke="#cfcfcf">
          <path d="M154.500 631v47M154.500 678.500H202M150.500 673.500h9v9h-9z" />
        </g>
        <g fill="#d8d8d8" fontFamily="Roboto, sans-serif" fontWeight="300" fontSize="19">
          <text x="156" y="628">Y</text>
          <text x="205" y="677">X</text>
        </g>
      </g>
    </svg>
  );
}

function Crosshair() {
  return (
    <svg className="pointer-events-none absolute inset-0 h-full w-full" aria-hidden="true">
      <g transform="translate(-141 -182)">
        <circle cx="866" cy="504" r="27" fill="#0b0bf0" />
        <path d="M0 502H4000" stroke="#c4c6c2" strokeWidth="2" />
        <path d="M865 0V4000" stroke="#d6d6d6" strokeWidth="2" />
        <text x="875" y="489" fill="#f5f5f5" fontFamily="'Liberation Mono', monospace" fontWeight="700" fontSize="12">?</text>
      </g>
    </svg>
  );
}

function ViewCube() {
  return (
    <div className="absolute top-[33px] right-[13px] flex w-[96px] flex-col items-center font-['Noto_Sans_CJK_SC',sans-serif] text-[13px] leading-[18px] text-[#c4c4c4]">
      <svg className="absolute top-[3px] left-[2px]" width="92" height="92" aria-hidden="true"><circle cx="46" cy="46" r="39" fill="none" stroke="#333" strokeWidth="8" /></svg>
      <span className="relative">北</span>
      <div className="relative flex w-full items-center justify-between py-[12px]">
        <span>西</span>
        <button type="button" className="size-[38px] border border-[#8b8b8b] bg-[#b4b4b4] text-[16px] text-[#222]">上</button>
        <span>东</span>
      </div>
      <span className="relative">南</span>
      <button type="button" className="mt-[11px] flex h-[16px] w-[44px] items-center gap-[4px] rounded border border-[#8c8a98] bg-[#aeacb8] px-[3px] text-[10px] leading-[14px] text-[#33333d]">
        WCS
        <span className="h-px w-[9px] bg-[#7c7a88]" />
      </button>
    </div>
  );
}

function NavBar() {
  return (
    <div className="absolute top-[184px] right-[4px] flex h-[199px] w-[30px] flex-col items-center rounded bg-[#484848] opacity-90">
      <svg width="30" height="199" fill="none" stroke="#1d1d1d" strokeWidth="1.200" aria-label="导航栏">
        <circle cx="24" cy="5" r="2.500" />
        <circle cx="24" cy="193" r="2.500" />
        <path d="M15 18h9q1 0 1 1v9a10 10 0 1 1-10-10z" />
        <circle cx="15" cy="28" r="5.500" />
        <path d="M10 36l2-4M20 36l-2-4M3 53h24M3 153h24" />
        <path d="M13 47h4l-2 2zM13 112h4l-2 2zM13 148h4l-2 2z" fill="#1d1d1d" stroke="none" />
        <path d="M10 76c-2-3-4-5-5-7 1-2 3-1 5 1l-2-8c1-2 2-1 3 1l1 4V59c1-2 3-1 3 0v7l2-6c1-1 3 0 2 1l-1 7 4-5c2 0 1 2 0 3l-3 6c0 3-2 4-3 6-3 1-5 0-6-2z" />
        <path d="M5 84l12 13M17 84L5 97M5 88v-4h4M17 88v-4h-4M5 93v4h4" />
        <circle cx="18" cy="97" r="4.500" />
        <path d="M21 101l5 5" strokeWidth="2" />
        <path d="M13 122l2-3 3 3v16l-3 3-2-3z" /><path d="M5 132c4-5 17-5 20 0l-3 3c-3-3-11-3-14 0z" />
        <path d="M5 159h6v6H5zM12 159h6v6h-6zM19 159h6v6h-6zM5 168h14v12H5z" />
        <path d="M9 170l6 4-6 4z" fill="#2b2b2b" stroke="none" />
      </svg>
    </div>
  );
}

function CommandLine() {
  return (
    <div className="absolute right-[227px] bottom-0 left-[228px] flex h-[23px] font-['Liberation_Mono','Noto_Sans_CJK_SC',monospace] text-[12px]">
      <div className="absolute bottom-[26px] left-[57px] flex flex-col items-start gap-[4px] text-[11px] leading-[15px] text-[#e2e2e2]">
        <p className="rounded-sm bg-[#555] px-[2px] whitespace-pre text-[#c4c4c4]">命令: DI DIST</p>
        <p className="rounded-sm bg-[#555] px-[2px] text-[12px]">指定第一点:</p>
      </div>
      <div className="flex w-[52px] shrink-0 items-center bg-[#2d3540] pl-[3px]">
        <Svg w={6} h={16}><path d="M1 0v16M3 0v16M5 0v16" strokeWidth="1" strokeDasharray="1 1" /></Svg>
        <IconButton label="关闭命令行" className="ml-[3px]"><Svg w={10} h={10}><path d="M1 1l8 8M9 1L1 9" strokeWidth="1.800" /></Svg></IconButton>
        <IconButton label="自定义" className="ml-[10px]"><Svg w={14} h={14}><path d="M2 12l7-7" strokeWidth="2.600" /><path d="M8 5c-1-3 1-5 4-5l-2 3 1 1 3-2c0 3-2 5-5 4z" fill="#dfe3e8" stroke="none" /></Svg></IconButton>
      </div>
      <div className="flex min-w-0 flex-1 items-center bg-white pr-[4px] pl-[4px] whitespace-pre text-[#222]">
        <Svg w={12} h={9}><path d="M0 0h12v4H0z" fill="#cfcfcf" stroke="none" /><path d="M0 4h12v5H0z" fill="#efe09a" stroke="none" /><path d="M0 7.500h12" stroke="#555" strokeDasharray="1 1" /></Svg>
        <Tri big dark className="mr-[5px] ml-[5px]" />
        <label htmlFor="cmd" className="flex items-center">
          <b>DIST</b>
          <span className="ml-[4px]">指定第二个点或 [</span>
          <span className="bg-[#d4d4d4]">多个点(<b className="text-[#22229a]">M</b>)</span>
          <span>]:</span>
        </label>
        <input id="cmd" className="min-w-0 flex-1 bg-transparent pl-1 outline-none" />
        <svg width="7" height="4" viewBox="0 0 8 5" className="fill-[#222]" aria-hidden="true"><path d="M0 5l4-5 4 5z" /></svg>
      </div>
    </div>
  );
}

function Workspace() {
  return (
    <main className="flex min-w-0 flex-1 flex-col">
      <div role="tablist" className="flex h-[18px] shrink-0 bg-[#efedee] font-['Noto_Sans_CJK_SC',sans-serif] text-[11px] leading-[17px] whitespace-nowrap text-[#222]">
        <button type="button" role="tab" className="border-r border-[#333] px-[9px]">基础候</button>
        <button type="button" role="tab" className="border-r-2 border-[#333] px-[10px]">承台桩编号</button>
        <button type="button" role="tab" aria-selected="true" className="bg-[#f8eef6] px-[8px] text-[#2c2080]">如何用CAD批量标注上万个圆桩坐标并编号</button>
      </div>
      <div className="relative min-h-0 flex-1 overflow-hidden bg-black">
        <Drawing />
        <div className="absolute top-[4px] left-[3px] font-['Noto_Sans_CJK_SC',sans-serif] text-[12px] leading-[17px] text-[#d6d6d6]">[−][俯视][二维线框]</div>
        <div className="absolute top-[9px] right-[11px] flex gap-[9px]">
          <IconButton label="最小化视口"><Svg w={10} h={10}><path d="M0 8h10" stroke="#fff" strokeWidth="3" /></Svg></IconButton>
          <IconButton label="还原视口"><Svg w={10} h={10}><path d="M1 3.500h6v5.500H1z" stroke="#fff" strokeWidth="1.800" /><path d="M3 1h6v6" stroke="#fff" /></Svg></IconButton>
          <IconButton label="关闭视口"><Svg w={10} h={10}><path d="M1 1l8 8M9 1L1 9" stroke="#fff" strokeWidth="2.400" /></Svg></IconButton>
        </div>
        <ViewCube />
        <NavBar />
        <Crosshair />
        <CommandLine />
      </div>
    </main>
  );
}

/* ---------- status bar ---------- */

const ARROW = "arrow";
const status = [
  ["栅格", <path d="M4 1v14M8 1v14M12 1v14M1 4h14M1 8h14M1 12h14" />],
  ["捕捉", <path d="M3 3h12M3 7h12M3 11h12M3 15h12" strokeWidth="2" strokeDasharray="2 1.400" />],
  [ARROW],
  ["推断约束", <><path d="M5 9V5h4M9 9V1h6v5H9" /><path d="M1 9h6v6H1z" fill="#e4e6ea" stroke="none" /></>],
  ["动态输入", <><path d="M5 1v8M1 5h8" /><path d="M8 10h8v3H8z" fill="#e4e6ea" /></>],
  ["正交", <path d="M2 1v13h13M2 9h5v5" />],
  ["极轴追踪", <><path d="M12 11a6 6 0 1 1-1-7M7 9l7-7M7 9h9" /><path d="M14 7l2 2-2 2" /></>],
  [ARROW],
  ["等轴测草图", <path d="M8 0v16M2 3l12 10M4 3l-2 2" stroke="#b4bac3" />],
  [ARROW],
  ["对象捕捉追踪", <path d="M2 14h13M2 14L14 2M8 4l4 5" />, true],
  ["对象捕捉", <><path d="M3 4h11v11H3z" /><path d="M0 1h5v5H0z" fill="#3b4453" stroke="#e4a680" /></>],
  [ARROW],
  ["线宽", <><path d="M1 3h15M7 6h9" strokeWidth="1.500" /><path d="M1 7h7M1 13h9" strokeWidth="3.500" /><path d="M9 9.500h7M10 13h6" /></>, true],
  ["切换工作空间", <><circle cx="8" cy="8" r="6" strokeWidth="2.800" strokeDasharray="2.400 2.310" /><circle cx="8" cy="8" r="3.600" strokeWidth="3" /></>],
  [ARROW],
  ["快捷特性", <><path d="M1 1h14v14H1z" stroke="#3c88c9" strokeWidth="1.800" fill="#1f4469" /><path d="M4 4h5v5H4zM7 7h5v5H7z" stroke="#55a8ea" /></>],
  ["单位", <path d="M1 3.500h14M1 8h14M1 12.500h14" stroke="#b4bac3" strokeWidth="1.600" />],
  ["透明度", <path d="M1 4h14M2 6h13M1 8h14M2 10h13M1 12h14" stroke="#8d95a0" strokeWidth="1" strokeDasharray="1 1" />],
  ["选择循环", <path d="M1 5h14M1 10h14" strokeWidth="2.200" stroke="#cdd2d8" />],
  ["注释监视器", <path d="M2 1v5M0 3.500h5M7 4h8M4 8h11M1 9l3 3-3 3M6 12h9" stroke="#cdd2d8" />],
  ["图形性能", <><circle cx="8" cy="6" r="5" stroke="#9fb3d9" /><path d="M4 0v9M1 3h9" /><path d="M1 9h6v5H1z" fill="#f5cf5f" stroke="none" /><path d="M6 10l4 4 6-8" stroke="#5fc15a" strokeWidth="3" /></>],
  ["自定义", <path d="M1 3h14M1 8h14M1 13h14" strokeWidth="1.800" />],
];

function StatusBar() {
  return (
    <footer className="flex h-[30px] shrink-0 items-start justify-between bg-[#222933] pr-[7px] pl-[11px] text-[11px] whitespace-nowrap text-[#dde1e6]">
      <div role="tablist" className="flex gap-[2px]">
        <button type="button" role="tab" aria-selected="true" className="h-[21px] rounded-b-lg bg-[#3b4453] px-[10px] font-bold text-white">模型</button>
        <button type="button" role="tab" className="h-[21px] rounded-b-lg bg-[#2d3540] px-[9px] text-[#bcc2ca]">布局1</button>
        <button type="button" role="tab" className="h-[21px] rounded-b-lg bg-[#2d3540] px-[10px] text-[#bcc2ca]">CAD江老师</button>
        <IconButton label="新建布局" className="h-[18px] w-[24px] rounded-b-lg bg-[#2d3540]"><Svg w={9} h={9}><path d="M4.500 0v9M0 4.500h9" /></Svg></IconButton>
      </div>
      <div className="mt-[3px] flex h-[24px] gap-px">
        <button type="button" className="flex w-[67px] items-center justify-center gap-[3px] bg-[#3b4453] font-medium text-[#eceef1]">比例 1:500 <Tri /></button>
        <button type="button" className="w-[198px] bg-[#3b4453] text-center text-[#eceef1]">1332116.3331, 516586.5462, 0.0000</button>
        <button type="button" className="w-[27px] bg-[#3b4453] font-medium text-[#eceef1]">模型</button>
        {status.map(([name, icon, on], i) =>
          name === ARROW ? (
            <IconButton key={i} label="更多选项" className="w-[14px] bg-[#3b4453]"><Tri big /></IconButton>
          ) : (
            <IconButton key={i} label={name} className={`w-[22px] ${on ? "bg-[#5c8cc4]" : "bg-[#3b4453]"}`}><Svg>{icon}</Svg></IconButton>
          )
        )}
      </div>
    </footer>
  );
}

/* ---------- app ---------- */

export default function App() {
  return (
    <div className={`flex h-screen min-h-[480px] flex-col overflow-hidden bg-[#222933] ${FONT}`}>
      <header className="flex shrink-0">
        <button type="button" aria-label="应用程序菜单" className="mt-[2px] ml-px flex h-[38px] w-[36px] items-start justify-between bg-linear-to-b from-[#b9bcc1] to-[#777b82] px-[2px] pt-[2px]">
          <svg width="24" height="27" aria-hidden="true">
            <path d="M0 25L9 1h7l6 24h-5l-2-6c-3-1-5 0-7 1l-3 5z" fill="#c3161c" />
            <path d="M9 15l3-9 2 8c-2 0-4 0-5 1z" fill="#a9acb1" />
            <path d="M0 25L9 1h3L5 25z" fill="#e4383c" />
          </svg>
          <svg width="6" height="4" viewBox="0 0 8 5" className="mt-[14px] fill-[#222]" aria-hidden="true"><path d="M0 0h8L4 5z" /></svg>
        </button>
        <div className="min-w-0 flex-1">
          <TitleBar />
          <RibbonTabs />
        </div>
      </header>
      <div className="flex shrink-0 overflow-hidden">
        <DrawPanel />
        <ModifyPanel />
        <AnnotatePanel />
        <LayersPanel />
        <BlockPanel />
        <PropertiesPanel />
        <GroupPanel />
        <UtilitiesPanel />
        <ClipboardPanel />
        <ViewPanel />
      </div>
      <div className="mt-[4px] shrink-0"><FileTabs /></div>
      <div className="flex min-h-0 flex-1 bg-[#343c4a] pr-[3px]">
        <SideMenu />
        <Workspace />
      </div>
      <StatusBar />
    </div>
  );
}
